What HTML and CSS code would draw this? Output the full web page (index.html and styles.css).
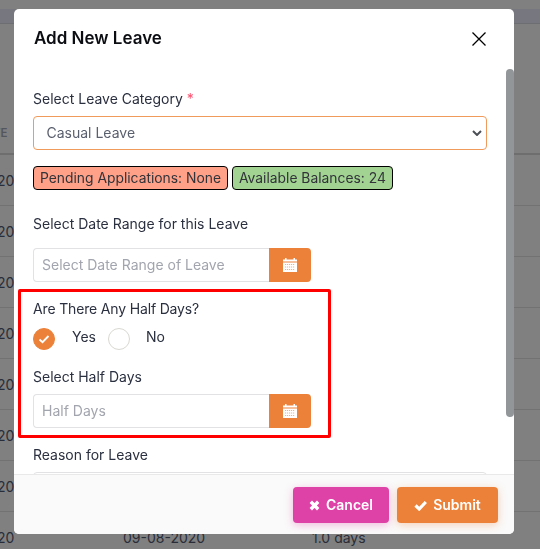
FILE: index.html
```html
<!DOCTYPE html>
<html lang="en">
<head>
<meta charset="utf-8">
<title>Add New Leave</title>
<link rel="stylesheet" href="styles.css">
</head>
<body>
<main class="page">
  <div class="top-band"></div>
  <div class="thead"><span class="c1">TE</span></div>
  <div class="row"><span class="c1">20</span></div>
  <div class="row"><span class="c1">20</span></div>
  <div class="row"><span class="c1">20</span></div>
  <div class="row"><span class="c1">20</span></div>
  <div class="row"><span class="c1">20</span></div>
  <div class="row"><span class="c1">20</span></div>
  <div class="row"><span class="c1">20</span></div>
  <div class="row last"><span class="c1">20</span><span class="c2">09-08-2020</span><span class="c3">1.0 days</span></div>
</main>

<div class="overlay">
  <section class="modal">
    <header class="modal-head">
      <h1 class="modal-title">Add New Leave</h1>
      <button class="close" type="button" aria-label="Close">
        <svg viewBox="0 0 14 14" width="14" height="14"><path d="M.5 .5l13 13M13.500 .5l-13 13" stroke="#000" stroke-width="1.300" fill="none"/></svg>
      </button>
    </header>
    <div class="modal-body">
      <div class="scroll-inner">
        <label class="label first">Select Leave Category <span class="req">*</span></label>
        <div class="select">
          <span>Casual Leave</span>
          <svg viewBox="0 0 10 6" width="10" height="6"><path d="M1 1l4 4 4-4" stroke="#4b4f56" stroke-width="2" fill="none"/></svg>
        </div>
        <div class="badges">
          <span class="badge red">Pending Applications: None</span>
          <span class="badge green">Available Balances: 24</span>
        </div>
        <label class="label range">Select Date Range for this Leave</label>
        <div class="input-group">
          <span class="input">Select Date Range of Leave</span>
          <span class="addon">
            <svg viewBox="0 0 14 14" width="14" height="14"><path d="M0 4.500V14H14V4.500ZM0 3.500H14V1.500H12V0H10.500V1.500H3.500V0H2V1.500H0Z" fill="#fff"/><path d="M2 6.500h10M2 9h10M2 11.500h10" stroke="#f7b27a" stroke-width="1" stroke-dasharray="1.200 .8"/></svg>
          </span>
        </div>
        <label class="label half">Are There Any Half Days?</label>
        <div class="radios">
          <span class="radio on"><svg viewBox="0 0 12 12" width="12" height="12"><path d="M1.500 6.500l3 2.700L10.500 3" stroke="#fff" stroke-width="1.800" fill="none"/></svg></span>
          <span class="radio-text yes">Yes</span>
          <span class="radio"></span>
          <span class="radio-text no">No</span>
        </div>
        <label class="label days">Select Half Days</label>
        <div class="input-group">
          <span class="input">Half Days</span>
          <span class="addon">
            <svg viewBox="0 0 14 14" width="14" height="14"><path d="M0 4.500V14H14V4.500ZM0 3.500H14V1.500H12V0H10.500V1.500H3.500V0H2V1.500H0Z" fill="#fff"/><path d="M2 6.500h10M2 9h10M2 11.500h10" stroke="#f7b27a" stroke-width="1" stroke-dasharray="1.200 .8"/></svg>
          </span>
        </div>
        <label class="label reason">Reason for Leave</label>
        <div class="textarea"></div>
      </div>
      <div class="scrollbar"></div>
    </div>
    <footer class="modal-foot">
      <button class="btn pink" type="button">
        <svg viewBox="0 0 11 11" width="11" height="11"><path d="M1.800 1.800l7.400 7.400M9.200 1.800l-7.400 7.400" stroke="#fff" stroke-width="3.400" fill="none"/></svg>
        Cancel
      </button>
      <button class="btn orange" type="button">
        <svg viewBox="0 0 13 11" width="13" height="11"><path d="M1.500 5.500l3.700 3.500L11.800 2" stroke="#fff" stroke-width="3.200" fill="none"/></svg>
        Submit
      </button>
    </footer>
    <div class="highlight"></div>
  </section>
</div>
</body>
</html>
```
FILE: styles.css
```css
* { box-sizing: border-box; }
html, body { margin: 0; height: 100%; overflow: hidden; }
body { background: #808080; font-family: Inter, "Liberation Sans", sans-serif; color: #2a2d38; }

.page { display: flex; flex-direction: column; height: 549px; }
.top-band { height: 9px; flex: none; }
.thead { height: 146px; flex: none; background: linear-gradient(#77787f 14px, #6d6e72 14px, #6d6e72 15px, #808080 15px); border-bottom: 2px solid #6e6e6e; position: relative; }
.c1 { position: absolute; left: -3px; font-size: 14px; color: #2a2d38; }
.thead .c1 { top: 117px; left: -7px; font-size: 11.500px; font-weight: 600; color: #55565c; }
.row { position: relative; height: 51px; flex: none; border-bottom: 1px solid #727272; }
.row .c1 { top: 17px; }
.row.last { border-bottom: 0; }
.c2, .c3 { position: absolute; font-size: 14px; top: 17px; color: #2a2d38; }
.c2 { left: 123px; }
.c3 { left: 312px; }

.overlay { position: fixed; inset: 0; }
.modal { position: absolute; left: 14px; top: 9px; width: 500px; height: 525px; background: #fff; border-radius: 5px; display: flex; flex-direction: column; overflow: hidden; }
.modal-head { height: 60px; flex: none; display: flex; justify-content: space-between; align-items: flex-start; padding: 19px 28px 0 20px; }
.modal-title { margin: 0; font-size: 17px; line-height: 20px; font-weight: 600; color: #0b0d12; }
.close { border: 0; background: none; padding: 0; margin-top: 4px; width: 14px; height: 14px; display: block; }
.close svg { display: block; }

.modal-body { flex: 1; position: relative; overflow: hidden; }
.scroll-inner { padding: 0 27px 0 19px; }
.label { display: block; font-size: 14px; line-height: 20px; color: #2b3040; }
.first { margin-top: 20px; }
.req { color: #ff4d6d; }
.select { margin-top: 7px; height: 34px; border: 1px solid #f09a5c; border-radius: 4px; display: flex; align-items: center; justify-content: space-between; padding: 0 4px 1px 12.500px; font-size: 14px; color: #5a5f6e; }
.badges { display: flex; gap: 4px; margin-top: 16px; }
.badge { height: 24px; border: 1px solid #000; border-radius: 4px; font-size: 13.850px; line-height: 22px; padding: 0 6px; color: #32343a; }
.badge.red { background: #ffa088; }
.badge.green { background: #a2d392; }
.range { margin-top: 24px; }
.input-group { display: flex; margin-top: 14px; width: 278px; height: 34px; }
.input { flex: 1; border: 1px solid #e2e2e4; border-right: 0; border-radius: 4px 0 0 4px; font-size: 14px; line-height: 32px; padding-left: 8px; color: #a2a5ae; }
.addon { width: 42px; background: #ec8139; border-radius: 0 4px 4px 0; display: flex; align-items: center; justify-content: center; }
.half { margin-top: 17px; letter-spacing: -.16px; }
.radios { display: flex; align-items: flex-start; margin-top: 9px; height: 23px; }
.radio { width: 22px; height: 22px; border-radius: 50%; border: 1px solid #d9d8d2; display: flex; align-items: center; justify-content: center; flex: none; }
.radio.on { background: #ec8139; border-color: #ec8139; }
.radio-text { font-size: 14px; line-height: 16px; margin-top: 1px; color: #2b3040; }
.yes { margin: 1px 12px 0 17px; }
.no { margin-left: 16px; }
.days { margin-top: 16px; }
.days + .input-group { margin-top: 7px; }
.reason { margin-top: 17px; }
.textarea { margin-top: 7px; height: 60px; border: 1px solid #e2e2e4; border-radius: 4px; }
.scrollbar { position: absolute; right: 0; top: 0; width: 8px; height: 348px; background: #939698; border-radius: 4px; }

.modal-foot { height: 60px; flex: none; background: #fafafa; border-top: 1px solid #e9e9e9; display: flex; justify-content: flex-end; align-items: flex-start; gap: 8px; padding: 12px 16px 0 0; }
.btn { height: 36px; border: 0; border-radius: 4px; color: #fff; font: 600 14px/36px Inter, "Liberation Sans", sans-serif; display: flex; align-items: center; justify-content: center; gap: 6px; padding: 0; }
.btn.pink { width: 96px; background: #df42a6; box-shadow: 0 2px 8px rgba(223, 66, 166, .35); }
.btn.orange { width: 101px; background: #ec8139; box-shadow: 0 2px 8px rgba(237, 129, 56, .35); }

.highlight { position: absolute; left: 4px; top: 280px; width: 313px; height: 149px; border: 3px solid #f00; border-radius: 2px; pointer-events: none; }
```
